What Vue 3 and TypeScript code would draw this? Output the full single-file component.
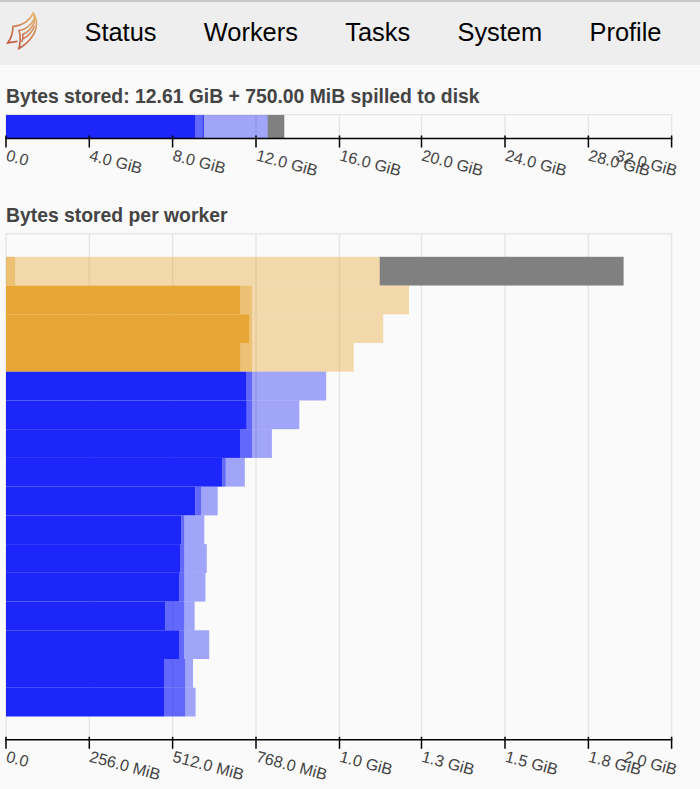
<script setup lang="ts">
interface Segment { x0: number; x1: number; alpha: number }
interface Row { y: number; h: number; color: string; segments: Segment[]; spill?: [number, number] }
interface Chart {
  title: string
  kind: string
  height: number
  top: number
  axis: number
  rows: Row[]
  labels: { text: string; x: number }[]
}

const tabs = ['Status', 'Workers', 'Tasks', 'System', 'Profile']
const ticks = [6, 89.3, 172.6, 256, 339.5, 421.5, 505, 588.4, 671.6]
const blue = '#1c26fa'
const orange = '#e7a635'

function row(y: number, h: number, color: string, a: number, b: number, c: number, spill?: [number, number]): Row {
  return {
    y, h, color, spill,
    segments: [
      { x0: 6, x1: a, alpha: 1 },
      { x0: a, x1: b, alpha: 0.69 },
      { x0: b, x1: c, alpha: 0.4 },
    ],
  }
}

const stops: [number, number, number][] = [
  [6, 15.3, 380], [240, 252, 409], [249, 252, 383.2], [240.6, 252, 353.7],
  [246, 252, 326.2], [246.7, 252, 299.3], [240.5, 252, 271.9], [222.3, 225.7, 244.8],
  [195.2, 201.2, 217.7], [181.3, 184.3, 204.3], [180.5, 184.3, 206.8], [179.5, 184.3, 205.4],
  [165.5, 184.3, 194.6], [179, 184, 209.2], [164, 185.2, 193], [164, 185.2, 195.6],
]
const workers = stops.map(([a, b, c], i) =>
  row(23.8 + i * 28.73, 28.73, i < 4 ? orange : blue, a, b, c, i === 0 ? [379.7, 623.6] : undefined))

function labels(texts: string[], lastX: number) {
  return texts.map((text, i) => ({ text, x: i === texts.length - 1 ? lastX : (ticks[i] ?? 0) }))
}

const charts: Chart[] = [
  {
    title: 'Bytes stored: 12.61 GiB + 750.00 MiB spilled to disk',
    kind: 'total', height: 90, top: 0.5, axis: 24.5,
    rows: [row(1, 23, blue, 195, 203.8, 268, [267.7, 284.3])],
    labels: labels(['0.0', '4.0 GiB', '8.0 GiB', '12.0 GiB', '16.0 GiB', '20.0 GiB', '24.0 GiB', '28.0 GiB', '32.0 GiB'], 615.5),
  },
  {
    title: 'Bytes stored per worker',
    kind: 'workers', height: 556, top: 0.8, axis: 506.8,
    rows: workers,
    labels: labels(['0.0', '256.0 MiB', '512.0 MiB', '768.0 MiB', '1.0 GiB', '1.3 GiB', '1.5 GiB', '1.8 GiB', '2.0 GiB'], 624),
  },
]
</script>

<template>
  <main class="dashboard">
    <header class="navbar">
      <svg class="logo" viewBox="0 0 40 42" width="40" height="42" aria-hidden="true">
        <defs>
          <linearGradient id="flame" gradientUnits="userSpaceOnUse" x1="10" y1="37" x2="36" y2="5">
            <stop offset="0" stop-color="#bd543d" />
            <stop offset="0.5" stop-color="#cf8058" />
            <stop offset="1" stop-color="#e4b66f" />
          </linearGradient>
        </defs>
        <g fill="none" stroke="url(#flame)" stroke-width="1.7" stroke-linejoin="miter">
          <path d="M17.5 31.4 L7.8 32.8 Q13 26 12.9 16.6 Q27 15.5 33.4 3.2 Q35 8 34.1 11.5" />
          <path d="M33.4 3.2 C37.5 9 38 19 31.5 27.6 Q26.5 34.5 18.9 38.4 Q21.5 29 19 20.5 Q29.5 19 34.1 9" />
          <path d="M21.8 32 Q23.6 28.3 22.7 24.4 Q30.8 21.2 34.7 11.5" />
          <path d="M23 28.8 Q31.2 24.7 34.7 15.8" />
        </g>
      </svg>
      <nav class="tabs">
        <a v-for="tab in tabs" :key="tab" class="tab" :class="tab.toLowerCase()">{{ tab }}</a>
      </nav>
    </header>

    <section v-for="chart in charts" :key="chart.kind" :class="chart.kind">
      <h2 class="title">{{ chart.title }}</h2>
      <svg class="plot" width="700" :height="chart.height" :viewBox="`0 0 700 ${chart.height}`">
        <g class="grid">
          <line v-for="x in ticks" :key="x" :x1="x" :x2="x" :y1="chart.top" :y2="chart.axis" />
          <line x1="5.3" x2="672.3" :y1="chart.top" :y2="chart.top" />
        </g>
        <g v-for="(bar, i) in chart.rows" :key="i">
          <rect v-for="(part, j) in bar.segments" :key="j" :x="part.x0" :y="bar.y"
            :width="part.x1 - part.x0" :height="bar.h" :fill="bar.color" :fill-opacity="part.alpha" />
          <rect v-if="bar.spill" :x="bar.spill[0]" :y="bar.y" :width="bar.spill[1] - bar.spill[0]"
            :height="bar.h" fill="#808080" />
        </g>
        <g class="overlap" v-if="chart.kind === 'total'">
          <rect x="202.7" y="1" width="1.2" height="23" />
        </g>
        <g class="axis">
          <line x1="5.3" x2="672.3" :y1="chart.axis" :y2="chart.axis" />
          <line v-for="x in ticks" :key="x" :x1="x" :x2="x" :y1="chart.axis - 3" :y2="chart.axis + 9" />
        </g>
        <g class="labels">
          <text v-for="label in chart.labels" :key="label.text"
            :transform="`translate(${label.x - 0.8} ${chart.axis + 21.7}) rotate(14.9)`">{{ label.text }}</text>
        </g>
      </svg>
    </section>
  </main>
</template>

<style>
body { margin: 0; background: #fafafa; }
</style>

<style scoped>
.dashboard {
  width: 700px;
  height: 789px;
  overflow: hidden;
  background: #fafafa;
  color: #444;
  font-family: "Liberation Sans", Arial, sans-serif;
}
.navbar {
  box-sizing: border-box;
  display: flex;
  height: 65px;
  padding-top: 8px;
  border-top: 2px solid #c9c9c9;
  background: #eee;
}
.logo { flex: none; }
.tabs {
  display: flex;
  justify-content: space-between;
  width: 577px;
  margin-left: 44.5px;
  color: #000;
  font-size: 25.4px;
  line-height: 45px;
}
.title {
  margin: 0;
  padding-left: 6px;
  font-size: 19.35px;
  font-weight: bold;
  line-height: 24px;
  white-space: nowrap;
}
.total .title { padding-top: 19px; padding-bottom: 6px; }
.workers .title { margin-top: -1px; padding-bottom: 6px; }
.plot { display: block; }
.grid line { stroke: #e5e5e5; stroke-width: 1.4; }
.axis line { stroke: #000; stroke-width: 1.5; }
.overlap { fill: #3840f9; }
.labels { fill: #444; font-size: 16.15px; }
</style>
